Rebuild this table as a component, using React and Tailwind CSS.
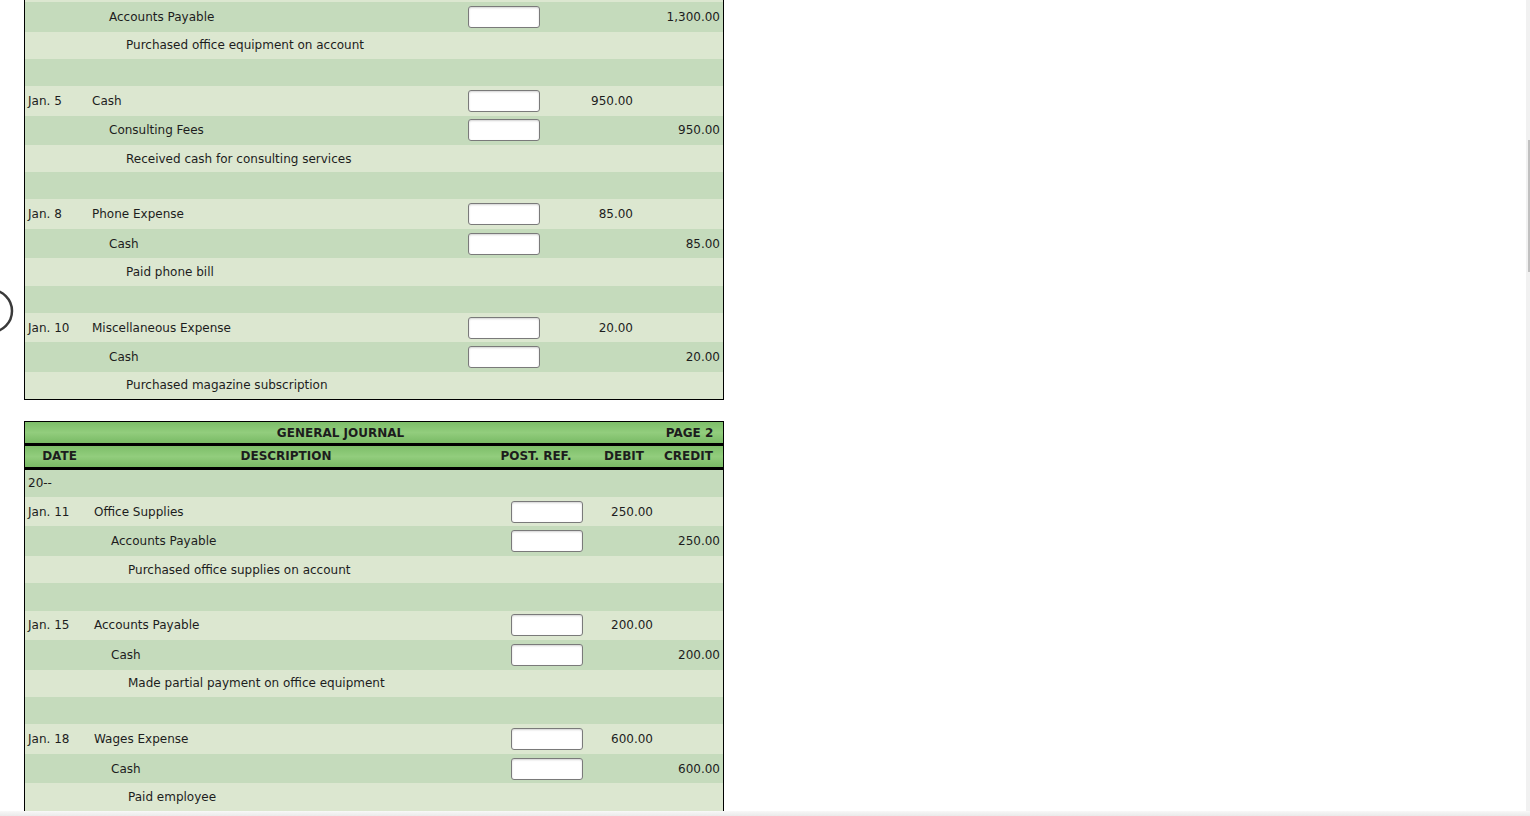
import React from "react";

const T1 = {
  date: "w-[67px]",
  desc: "w-[372px]",
  post: "w-[80px]",
  debit: "w-[92px]",
  credit: "w-[87px]",
  plain: "h-[27.2px]",
};
const T2 = {
  date: "w-[69px]",
  desc: "w-[413px]",
  post: "w-[80px]",
  debit: "w-[69px]",
  credit: "w-[67px]",
  plain: "h-[27.4px]",
};

const indent = ["pl-0", "pl-[17px]", "pl-[34px]"];

function Row({ r, dark, cols }) {
  const bg = dark ? "bg-[#c5dbbc]" : "bg-[#dce7d0]";
  const h = r.input ? "h-[29.5px]" : cols.plain;
  return (
    <div className={`flex items-center ${bg} ${h} shrink-0`}>
      <div className={`${cols.date} shrink-0 pl-[3px] whitespace-nowrap`}>{r.date || ""}</div>
      <div className={`${cols.desc} shrink-0 whitespace-nowrap ${indent[r.level || 0]}`}>{r.text || ""}</div>
      <div className={`${cols.post} shrink-0 flex justify-center`}>
        {r.input ? (
          <div className="w-[72px] h-[22px] bg-white border border-[#7a7a7a] rounded-[3px] shadow-[inset_0_1px_2px_rgba(0,0,0,0.18)]" />
        ) : null}
      </div>
      <div className={`${cols.debit} shrink-0 text-right pr-[3px]`}>{r.debit || ""}</div>
      <div className={`${cols.credit} shrink-0 text-right pr-[3px]`}>{r.credit || ""}</div>
    </div>
  );
}

const rows1 = [
  {},
  { text: "Accounts Payable", level: 1, input: true, credit: "1,300.00" },
  { text: "Purchased office equipment on account", level: 2 },
  {},
  { date: "Jan. 5", text: "Cash", level: 0, input: true, debit: "950.00" },
  { text: "Consulting Fees", level: 1, input: true, credit: "950.00" },
  { text: "Received cash for consulting services", level: 2 },
  {},
  { date: "Jan. 8", text: "Phone Expense", level: 0, input: true, debit: "85.00" },
  { text: "Cash", level: 1, input: true, credit: "85.00" },
  { text: "Paid phone bill", level: 2 },
  {},
  { date: "Jan. 10", text: "Miscellaneous Expense", level: 0, input: true, debit: "20.00" },
  { text: "Cash", level: 1, input: true, credit: "20.00" },
  { text: "Purchased magazine subscription", level: 2 },
];

const rows2 = [
  { date: "20--" },
  { date: "Jan. 11", text: "Office Supplies", level: 0, input: true, debit: "250.00" },
  { text: "Accounts Payable", level: 1, input: true, credit: "250.00" },
  { text: "Purchased office supplies on account", level: 2 },
  {},
  { date: "Jan. 15", text: "Accounts Payable", level: 0, input: true, debit: "200.00" },
  { text: "Cash", level: 1, input: true, credit: "200.00" },
  { text: "Made partial payment on office equipment", level: 2 },
  {},
  { date: "Jan. 18", text: "Wages Expense", level: 0, input: true, debit: "600.00" },
  { text: "Cash", level: 1, input: true, credit: "600.00" },
  { text: "Paid employee", level: 2 },
  {},
  {},
];

export default function App() {
  return (
    <div className="relative w-[1530px] h-[816px] overflow-hidden bg-white font-['DejaVu_Sans','Verdana',sans-serif] text-[12px] text-[#1d1d1d]">
      <div className="flex flex-col">
        {/* Table 1 (continued from above) */}
        <div className="ml-[24px] -mt-[25px] w-[700px] border-x border-b border-black flex flex-col">
          {rows1.map((r, i) => (
            <Row key={i} r={r} dark={i % 2 === 1} cols={T1} />
          ))}
        </div>

        {/* Table 2 */}
        <div className="ml-[24px] mt-[21px] w-[700px] border border-black flex flex-col">
          <div className="flex items-center h-[21px] bg-linear-to-b from-[#7dbe69] via-[#92cd7d] to-[#79ba65] font-bold">
            <div className="w-[631px] text-center">GENERAL JOURNAL</div>
            <div className="w-[67px] text-center">PAGE 2</div>
          </div>
          <div className="h-[3px] bg-black" />
          <div className="flex items-center h-[20.5px] bg-linear-to-b from-[#7dbe69] via-[#92cd7d] to-[#79ba65] font-bold">
            <div className="w-[69px] text-center">DATE</div>
            <div className="w-[384px] text-center">DESCRIPTION</div>
            <div className="w-[116px] text-center">POST. REF.</div>
            <div className="w-[60px] text-center">DEBIT</div>
            <div className="w-[69px] text-center">CREDIT</div>
          </div>
          <div className="h-[3px] bg-black" />
          {rows2.map((r, i) => (
            <Row key={i} r={r} dark={i % 2 === 0} cols={T2} />
          ))}
        </div>
      </div>

      {/* partially visible circle at left edge */}
      <svg className="absolute left-[-32px] top-[288px]" width="46" height="46" viewBox="0 0 46 46">
        <circle cx="23" cy="23" r="21" fill="none" stroke="#3a3a3a" strokeWidth="2.5" />
      </svg>

      {/* scrollbars */}
      <div className="absolute right-0 top-0 w-[4px] h-full bg-[#f1f1f1]" />
      <div className="absolute right-0 top-[140px] w-[2px] h-[132px] bg-[#c1c1c1]" />
      <div className="absolute left-0 bottom-0 w-full h-[5px] bg-linear-to-b from-[#f8f8f8] to-[#eaeaea]" />
    </div>
  );
}
